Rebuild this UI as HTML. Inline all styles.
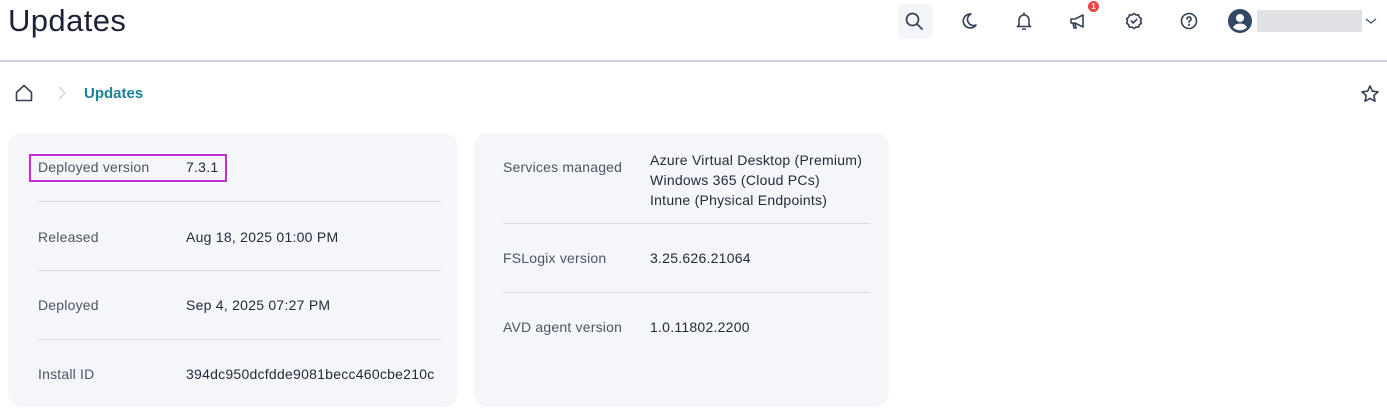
<!DOCTYPE html>
<html><head><style>
*{margin:0;padding:0;box-sizing:border-box}
body{width:1387px;height:415px;background:#fff;font-family:"Liberation Sans",sans-serif;position:relative;overflow:hidden;color:#1f2937}
.abs{position:absolute}
.title{left:8px;top:3px;font-size:31px;color:#1e2238;letter-spacing:0.4px}
.hline{left:0;top:60px;width:1387px;height:2px;background:#cbd3de}
.card{background:#f5f6fa;border-radius:14px;top:133px;height:274px}
.lbl{font-size:14px;color:#4b5563;letter-spacing:0.2px}
.val{font-size:14px;color:#1f2937;letter-spacing:0.25px}
.div{height:1px;background:#d6d9df}
svg{position:absolute}
</style></head><body>
<div class="abs title">Updates</div>
<div class="abs" style="left:898px;top:4px;width:35px;height:35px;background:#f3f5f9;border-radius:6px"></div>
<svg style="left:904px;top:11px" width="20" height="20" viewBox="0 0 20 20" fill="none" stroke="#334155" stroke-width="1.7" stroke-linecap="round"><circle cx="8.5" cy="8.5" r="6"/><path d="M13 13l5 5"/></svg>
<svg style="left:959px;top:11px" width="20" height="20" viewBox="0 0 20 20" fill="none" stroke="#334155" stroke-width="1.6" stroke-linejoin="round"><path d="M12 3a7 7 0 1 0 5 11A6 6 0 0 1 12 3z"/></svg>
<svg style="left:1014px;top:11px" width="20" height="20" viewBox="0 0 20 20" fill="none" stroke="#334155" stroke-width="1.6" stroke-linecap="round" stroke-linejoin="round"><path d="M5 14V9a5 5 0 0 1 10 0v5l1.5 1.5h-13z"/><path d="M8.5 18h3M10 2v1.5"/></svg>
<svg style="left:1068px;top:11px" width="20" height="20" viewBox="0 0 20 20" fill="none" stroke="#334155" stroke-width="1.6" stroke-linejoin="round"><path d="M3 8h4l8-4v12l-8-4H3z"/><path d="M5 12l1 5h2l-1-5"/></svg>
<div class="abs" style="left:1088px;top:1px;width:11px;height:11px;border-radius:50%;background:#ef4444;color:#fff;font-size:8px;font-weight:bold;text-align:center;line-height:11px">1</div>
<svg style="left:1124px;top:11px" width="20" height="20" viewBox="0 0 20 20" fill="none" stroke="#334155" stroke-width="1.6" stroke-linecap="round" stroke-linejoin="round"><path d="M10 2.5l2 1.5 2.5-.2.8 2.4 2 1.5-.8 2.3.8 2.3-2 1.5-.8 2.4-2.5-.2-2 1.5-2-1.5-2.5.2-.8-2.4-2-1.5.8-2.3-.8-2.3 2-1.5.8-2.4 2.5.2z"/><path d="M7.3 10l2 2 3.5-3.7"/></svg>
<svg style="left:1179px;top:11px" width="20" height="20" viewBox="0 0 20 20" fill="none" stroke="#334155" stroke-width="1.6" stroke-linecap="round"><circle cx="10" cy="10" r="7.5"/><path d="M8 8a2 2 0 1 1 2.8 1.8c-.6.3-.8.7-.8 1.4"/><circle cx="10" cy="13.8" r=".4"/></svg>
<svg style="left:1228px;top:9px" width="24" height="24" viewBox="0 0 24 24"><circle cx="12" cy="12" r="12" fill="#334766"/><circle cx="12" cy="9" r="4" fill="#fff"/><path d="M5 18.5c1.5-3 4-4 7-4s5.5 1 7 4a10 10 0 0 1-14 0z" fill="#fff"/></svg>
<div class="abs" style="left:1257px;top:10px;width:105px;height:22px;background:#dfe1e5"></div>
<svg style="left:1365px;top:16px" width="12" height="10" viewBox="0 0 12 10" fill="none" stroke="#475569" stroke-width="1.4"><path d="M1 3l5 4 5-4"/></svg>
<div class="abs hline"></div>
<svg style="left:14px;top:83px" width="20" height="20" viewBox="0 0 20 20" fill="none" stroke="#334155" stroke-width="1.6" stroke-linejoin="round"><path d="M2.5 9.5L10 2.5l7.5 7v8h-15z"/></svg>
<svg style="left:56px;top:85px" width="12" height="16" viewBox="0 0 12 16" fill="none" stroke="#cbd1d9" stroke-width="1.3"><path d="M3 2l6 6-6 6"/></svg>
<div class="abs" style="left:84px;top:85px;font-size:15px;font-weight:bold;color:#1f8196">Updates</div>
<svg style="left:1360px;top:84px" width="20" height="20" viewBox="0 0 20 20" fill="none" stroke="#334155" stroke-width="1.6" stroke-linejoin="round"><path d="M10 2l2.4 5.2 5.6.6-4.2 3.8 1.2 5.6L10 14.4 5 17.2l1.2-5.6L2 7.8l5.6-.6z"/></svg>

<div class="abs card" style="left:8px;width:450px"></div>
<div class="abs card" style="left:474px;width:415px"></div>

<div class="abs" style="left:29px;top:154px;width:198px;height:28px;border:2px solid #c22ed0"></div>
<div class="abs lbl" style="left:38px;top:159px">Deployed version</div><div class="abs val" style="left:186px;top:159px">7.3.1</div>
<div class="abs div" style="left:38px;top:201px;width:403px"></div>
<div class="abs lbl" style="left:38px;top:229px">Released</div><div class="abs val" style="left:186px;top:229px">Aug 18, 2025 01:00 PM</div>
<div class="abs div" style="left:38px;top:270px;width:403px"></div>
<div class="abs lbl" style="left:38px;top:297px">Deployed</div><div class="abs val" style="left:186px;top:297px">Sep 4, 2025 07:27 PM</div>
<div class="abs div" style="left:38px;top:339px;width:403px"></div>
<div class="abs lbl" style="left:38px;top:366px">Install ID</div><div class="abs val" style="left:186px;top:366px">394dc950dcfdde9081becc460cbe210c</div>

<div class="abs lbl" style="left:503px;top:159px">Services managed</div>
<div class="abs val" style="left:650px;top:150px;line-height:20px">Azure Virtual Desktop (Premium)<br>Windows 365 (Cloud PCs)<br>Intune (Physical Endpoints)</div>
<div class="abs div" style="left:503px;top:223px;width:367px"></div>
<div class="abs lbl" style="left:503px;top:250px">FSLogix version</div><div class="abs val" style="left:650px;top:250px">3.25.626.21064</div>
<div class="abs div" style="left:503px;top:292px;width:367px"></div>
<div class="abs lbl" style="left:503px;top:319px">AVD agent version</div><div class="abs val" style="left:650px;top:319px">1.0.11802.2200</div>
</body></html>
